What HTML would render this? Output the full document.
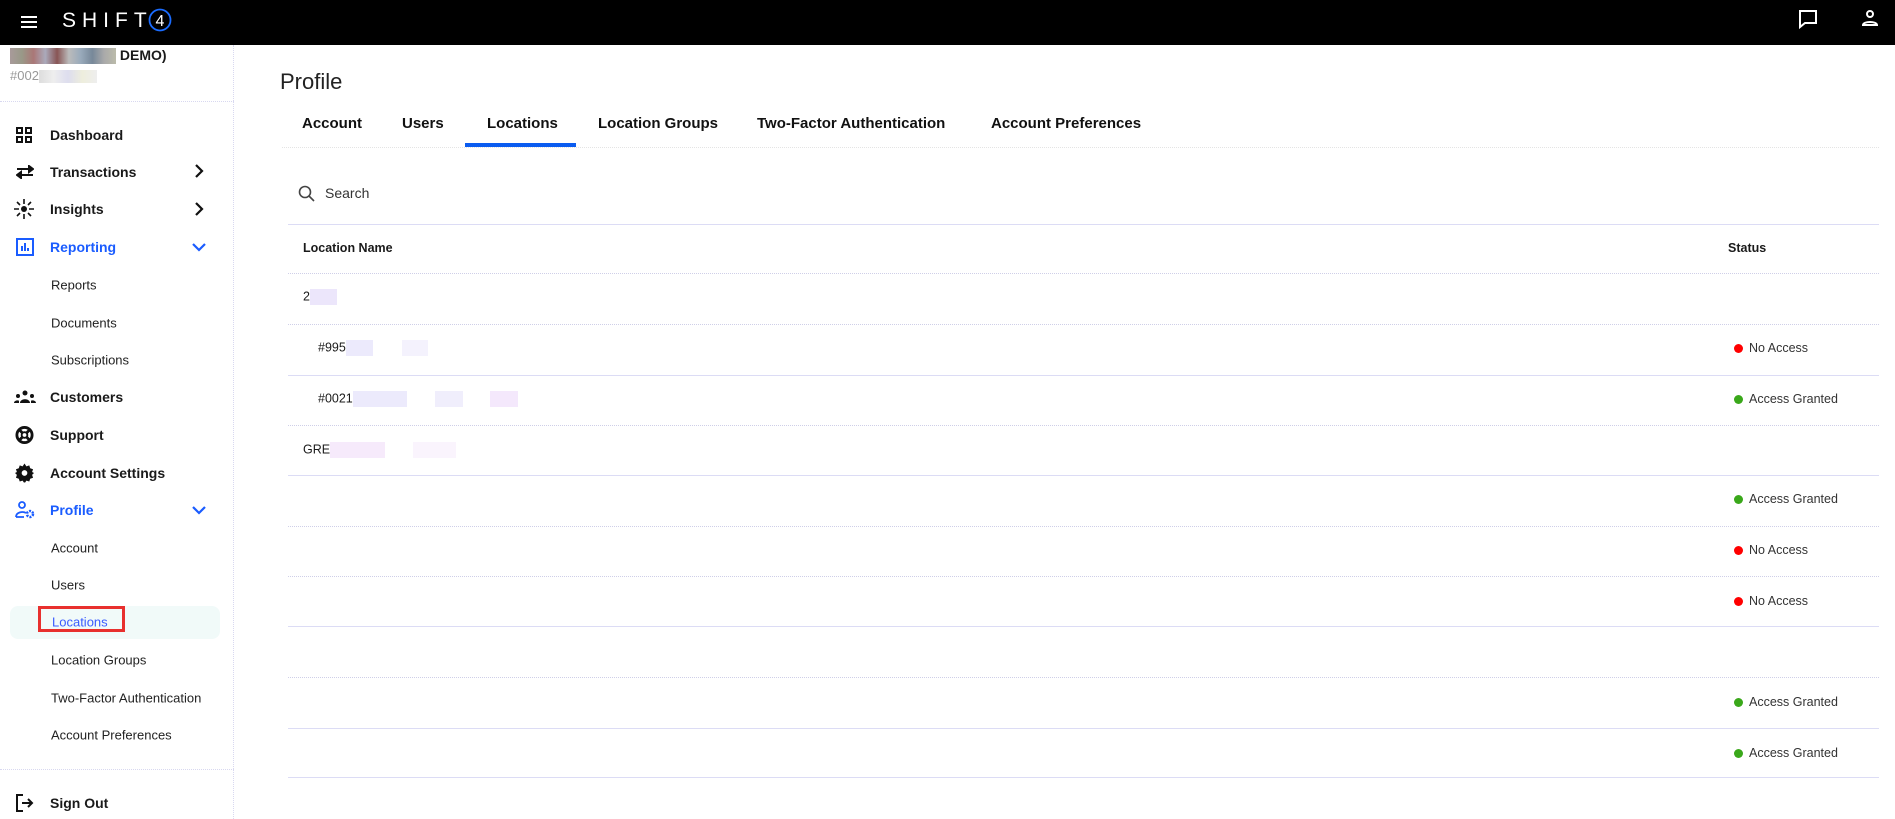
<!DOCTYPE html>
<html><head><meta charset="utf-8"><style>
*{margin:0;padding:0;box-sizing:border-box}
body{width:1895px;height:819px;overflow:hidden;background:#fff;font-family:"Liberation Sans",sans-serif;color:#1a1a1a;position:relative}
.hdr{position:absolute;left:0;top:0;width:1895px;height:45px;background:#000}
.abs{position:absolute;white-space:nowrap}
.side{position:absolute;left:0;top:45px;width:234px;height:774px;border-right:1px dotted #d8d8f0}
.mi{position:absolute;left:50px;font-size:14px;font-weight:bold;transform:translateY(-50%)}
.si{position:absolute;left:51px;font-size:13px;color:#222;transform:translateY(-50%)}
.ic{position:absolute;left:14px;transform:translateY(-50%)}
.chev{position:absolute;left:194px;transform:translateY(-50%)}
.tab{position:absolute;top:115px;font-size:15px;font-weight:bold;color:#111}
.rl{position:absolute;left:288px;width:1591px;border-top:1px dotted #cfcfe8}
.st{position:absolute;left:1734px;font-size:12.5px;color:#333;transform:translateY(-50%)}
.dot{display:inline-block;width:9px;height:9px;border-radius:50%;margin-right:6px;vertical-align:-1px}
.blur{display:inline-block;height:16px;vertical-align:middle}
</style></head><body>
<div class="hdr">
 <svg class="abs" style="left:20px;top:13px" width="18" height="18" viewBox="0 0 18 18"><path d="M1 4h16M1 9h16M1 14h16" stroke="#fff" stroke-width="2"/></svg>
 <div class="abs" style="left:62px;top:9px;color:#fff;font-size:21px;letter-spacing:6px;line-height:24px">SHIFT</div>
 <svg class="abs" style="left:148px;top:8px" width="24" height="24" viewBox="0 0 24 24"><circle cx="12" cy="12" r="10.5" fill="none" stroke="#1a6cff" stroke-width="1.8"/><text x="12" y="18" fill="#fff" font-size="16" text-anchor="middle" font-family="Liberation Sans">4</text></svg>
 <svg class="abs" style="left:1797px;top:8px" width="22" height="22" viewBox="0 0 22 22"><path d="M3 3h16v12H8l-5 4z" fill="none" stroke="#fff" stroke-width="2"/></svg>
 <svg class="abs" style="left:1861px;top:9px" width="18" height="18" viewBox="0 0 18 18"><circle cx="9" cy="5" r="3" fill="none" stroke="#fff" stroke-width="2"/><path d="M2 16c0-4 14-4 14 0z" fill="none" stroke="#fff" stroke-width="2"/></svg>
</div>
<div class="side">
 <div class="abs" style="left:10px;top:2px;font-size:14px;font-weight:bold"><span class="blur" style="width:106px;background:linear-gradient(90deg,#a89a9a,#998,#a77,#aab,#855,#bbb,#9ab,#789,#aaa,#bba)"></span> DEMO)</div>
 <div class="abs" style="left:10px;top:23px;font-size:13px;color:#999">#002<span class="blur" style="width:58px;height:13px;background:linear-gradient(90deg,#ddd,#eee,#dde,#eed,#eee)"></span></div>
 <div class="abs" style="left:0;top:56px;width:234px;border-top:1px dotted #d8d8f0"></div>
</div>
<svg class="ic" style="top:135px;left:16px" width="16" height="16" viewBox="0 0 16 16"><g fill="none" stroke="#111" stroke-width="2"><rect x="1" y="1" width="5" height="5"/><rect x="10" y="1" width="5" height="5"/><rect x="1" y="10" width="5" height="5"/><rect x="10" y="10" width="5" height="5"/></g></svg>
<div class="mi" style="top:135px">Dashboard</div>
<svg class="ic" style="top:172px;left:16px" width="18" height="14" viewBox="0 0 18 14"><path d="M4 10h13M1 10l4-3v6zM1 4h13M17 4l-4-3v6z" stroke="#111" stroke-width="2" fill="#111"/></svg>
<div class="mi" style="top:172px">Transactions</div>
<svg class="chev" style="top:171px" width="10" height="14" viewBox="0 0 10 14"><path d="M2 1l6 6-6 6" fill="none" stroke="#111" stroke-width="2.2"/></svg>
<svg class="ic" style="top:209px;left:14px" width="20" height="20" viewBox="0 0 20 20"><circle cx="10" cy="10" r="3" fill="#111"/><path d="M10 0v5M10 15v5M0 10h5M15 10h5M3 3l3 3M14 14l3 3M17 3l-3 3M3 17l3-3" stroke="#111" stroke-width="1.6"/></svg>
<div class="mi" style="top:209px">Insights</div>
<svg class="chev" style="top:209px" width="10" height="14" viewBox="0 0 10 14"><path d="M2 1l6 6-6 6" fill="none" stroke="#111" stroke-width="2.2"/></svg>
<svg class="ic" style="top:247px;left:16px" width="18" height="18" viewBox="0 0 18 18"><rect x="1" y="1" width="16" height="16" fill="none" stroke="#1a5cff" stroke-width="2"/><path d="M6 13V8M9 13V5M12 13v-3" stroke="#1a5cff" stroke-width="2"/></svg>
<div class="mi" style="top:247px;color:#1a5cff">Reporting</div>
<svg class="chev" style="top:247px;left:192px" width="14" height="10" viewBox="0 0 14 10"><path d="M1 2l6 6 6-6" fill="none" stroke="#1a5cff" stroke-width="2.2"/></svg>
<div class="si" style="top:285px">Reports</div>
<div class="si" style="top:323px">Documents</div>
<div class="si" style="top:360px">Subscriptions</div>
<svg class="ic" style="top:397px;left:14px" width="22" height="14" viewBox="0 0 22 14"><circle cx="11" cy="3" r="2.5" fill="#111"/><circle cx="4" cy="6" r="2" fill="#111"/><circle cx="18" cy="6" r="2" fill="#111"/><path d="M6 13c0-5 10-5 10 0zM0 13c0-3 5-3 5-2v2zM22 13c0-3-5-3-5-2v2z" fill="#111"/></svg>
<div class="mi" style="top:397px">Customers</div>
<svg class="ic" style="top:435px;left:15px" width="19" height="19" viewBox="0 0 20 20"><circle cx="10" cy="10" r="8" fill="none" stroke="#111" stroke-width="3"/><circle cx="10" cy="10" r="3" fill="none" stroke="#111" stroke-width="2"/><path d="M4 4l4 4M16 4l-4 4M4 16l4-4M16 16l-4-4" stroke="#111" stroke-width="3"/></svg>
<div class="mi" style="top:435px">Support</div>
<svg class="ic" style="top:473px;left:15px" width="19" height="19" viewBox="0 0 20 20"><path d="M10 0l2 3 3-1 1 3 3 1-1 3 2 1-2 2 1 3-3 1-1 3-3-1-2 3-2-3-3 1-1-3-3-1 1-3-2-2 2-1-1-3 3-1 1-3 3 1z" fill="#111"/><circle cx="10" cy="10" r="3" fill="#fff"/></svg>
<div class="mi" style="top:473px">Account Settings</div>
<svg class="ic" style="top:510px;left:15px" width="20" height="18" viewBox="0 0 20 18"><circle cx="7" cy="4" r="3" fill="none" stroke="#1a5cff" stroke-width="1.8"/><path d="M1 16c0-5 7-6 10-4M1 16h8" fill="none" stroke="#1a5cff" stroke-width="1.8"/><circle cx="15" cy="13" r="3" fill="none" stroke="#1a5cff" stroke-width="2.5" stroke-dasharray="2 1.2"/></svg>
<div class="mi" style="top:510px;color:#1a5cff">Profile</div>
<svg class="chev" style="top:510px;left:192px" width="14" height="10" viewBox="0 0 14 10"><path d="M1 2l6 6 6-6" fill="none" stroke="#1a5cff" stroke-width="2.2"/></svg>
<div class="si" style="top:548px">Account</div>
<div class="si" style="top:585px">Users</div>
<div class="abs" style="left:10px;top:606px;width:210px;height:33px;background:#f1faf9;border-radius:8px"></div>
<div class="abs" style="left:38px;top:606px;width:87px;height:26px;border:3px solid #e8302e"></div>
<div class="si" style="top:622px;left:52px;color:#3a5cff">Locations</div>
<div class="si" style="top:660px">Location Groups</div>
<div class="si" style="top:698px">Two-Factor Authentication</div>
<div class="si" style="top:735px">Account Preferences</div>
<div class="abs" style="left:0;top:769px;width:234px;border-top:1px dotted #d8d8f0"></div>
<svg class="ic" style="top:803px;left:16px" width="18" height="18" viewBox="0 0 18 18"><path d="M7 1H1v16h6" fill="none" stroke="#111" stroke-width="2"/><path d="M6 9h10M12 5l4 4-4 4" fill="none" stroke="#111" stroke-width="2"/></svg>
<div class="mi" style="top:803px">Sign Out</div>

<div class="abs" style="left:280px;top:69px;font-size:22px;color:#222">Profile</div>
<div class="tab" style="left:302px">Account</div>
<div class="tab" style="left:402px">Users</div>
<div class="tab" style="left:487px">Locations</div>
<div class="tab" style="left:598px">Location Groups</div>
<div class="tab" style="left:757px">Two-Factor Authentication</div>
<div class="tab" style="left:991px">Account Preferences</div>
<div class="abs" style="left:465px;top:143px;width:111px;height:4px;background:#0b5cf0"></div>
<div class="abs" style="left:282px;top:147px;width:1597px;border-top:1px dotted #e4e4e4"></div>
<svg class="abs" style="left:298px;top:185px" width="18" height="18" viewBox="0 0 18 18"><circle cx="7" cy="7" r="5.5" fill="none" stroke="#444" stroke-width="1.6"/><path d="M11 11l5 5" stroke="#444" stroke-width="1.6"/></svg>
<div class="abs" style="left:325px;top:185px;font-size:14px;color:#333">Search</div>
<div class="abs" style="left:288px;top:224px;width:1591px;border-top:1px solid #dcdcf5"></div>
<div class="abs" style="left:303px;top:241px;font-size:12.5px;font-weight:bold">Location Name</div>
<div class="abs" style="left:1728px;top:241px;font-size:12.5px;font-weight:bold">Status</div>
<div class="rl" style="top:273px"></div>
<div class="rl" style="top:324px"></div>
<div class="rl" style="top:375px;border-top:1px solid #dcdcf5"></div>
<div class="rl" style="top:425px"></div>
<div class="rl" style="top:475px;border-top:1px solid #dcdcf5"></div>
<div class="rl" style="top:526px"></div>
<div class="rl" style="top:576px"></div>
<div class="rl" style="top:626px;border-top:1px solid #dcdcf5"></div>
<div class="rl" style="top:677px"></div>
<div class="rl" style="top:728px;border-top:1px solid #dcdcf5"></div>
<div class="rl" style="top:777px;border-top:1px solid #dcdcf5"></div>
<div class="abs" style="left:303px;top:289px;font-size:12.5px">2<span class="blur" style="width:27px;background:#ece6fb"></span></div>
<div class="abs" style="left:318px;top:340px;font-size:12.5px">#995<span class="blur" style="width:27px;background:#eceafc"></span><span class="blur" style="width:29px"></span><span class="blur" style="width:26px;background:#f4f2fd"></span></div>
<div class="abs" style="left:318px;top:391px;font-size:12.5px">#0021<span class="blur" style="width:54px;background:#eceafc"></span><span class="blur" style="width:28px"></span><span class="blur" style="width:28px;background:#f0eefc"></span><span class="blur" style="width:27px"></span><span class="blur" style="width:28px;background:#f4e8fc"></span></div>
<div class="abs" style="left:303px;top:442px;font-size:12.5px">GRE<span class="blur" style="width:55px;background:#f6eafb"></span><span class="blur" style="width:28px"></span><span class="blur" style="width:43px;background:#faf4fd"></span></div>
<div class="st" style="top:348px"><span class="dot" style="background:#f00"></span>No Access</div>
<div class="st" style="top:399px"><span class="dot" style="background:#3aa81a"></span>Access Granted</div>
<div class="st" style="top:499px"><span class="dot" style="background:#3aa81a"></span>Access Granted</div>
<div class="st" style="top:550px"><span class="dot" style="background:#f00"></span>No Access</div>
<div class="st" style="top:601px"><span class="dot" style="background:#f00"></span>No Access</div>
<div class="st" style="top:702px"><span class="dot" style="background:#3aa81a"></span>Access Granted</div>
<div class="st" style="top:753px"><span class="dot" style="background:#3aa81a"></span>Access Granted</div>
</body></html>
